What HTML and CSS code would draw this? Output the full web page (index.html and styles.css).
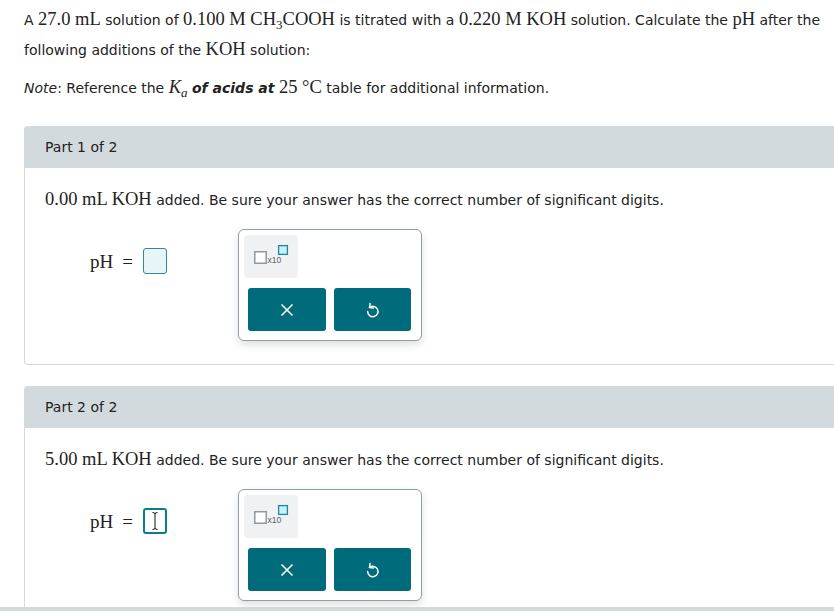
FILE: index.html
```html
<!DOCTYPE html>
<html>
<head>
<meta charset="utf-8">
<link rel="stylesheet" href="styles.css">
</head>
<body>
<div class="page">
  <p class="intro">A <span class="m">27.0 mL</span> solution of <span class="m">0.100 M CH<sub>3</sub>COOH</span> is titrated with a <span class="m">0.220 M KOH</span> solution. Calculate the <span class="m">pH</span> after the following additions of the <span class="m">KOH</span> solution:</p>
  <p class="note"><i>Note</i>: Reference the <span class="m"><i>K</i><sub><i>a</i></sub></span> <b><i>of acids at</i></b> <span class="m">25 °C</span> table for additional information.</p>

  <section class="part">
    <div class="part-head">Part 1 of 2</div>
    <div class="part-body">
      <div class="question"><span class="m">0.00 mL KOH</span> added. Be sure your answer has the correct number of significant digits.</div>
      <div class="answer-row">
        <div class="eq"><span class="m lbl">pH</span><span class="m eqs">=</span><span class="box"></span></div>
        <div class="popup">
          <div class="tool">
            <svg width="54" height="43" viewBox="0 0 54 43">
              <rect x="10.75" y="16.75" width="11.5" height="11.5" fill="#fff" stroke="#8d9aa1" stroke-width="1.5"/>
              <text x="23.5" y="28" font-family="Liberation Sans, sans-serif" font-size="8.5" fill="#5a6268">x10</text>
              <rect x="34.6" y="10.6" width="8.8" height="8.8" fill="#c9eef4" stroke="#1a8ba0" stroke-width="1.3"/>
            </svg>
          </div>
          <div class="btns">
            <button class="btn"><svg width="14" height="14" viewBox="0 0 14 14"><path d="M1.5 1.5 L12.5 12.5 M12.5 1.5 L1.5 12.5" stroke="#fff" stroke-width="1.6" fill="none"/></svg></button>
            <button class="btn"><svg width="15" height="16" viewBox="0 0 15 16"><path d="M4.6 5.4 A5.2 5.2 0 1 1 2.6 9.6" stroke="#fff" stroke-width="1.5" fill="none" stroke-linecap="round"/><path d="M5 1.6 L4.5 5.6 L8.4 5.9" stroke="#fff" stroke-width="1.5" fill="none" stroke-linecap="round" stroke-linejoin="round"/></svg></button>
          </div>
        </div>
      </div>
    </div>
  </section>

  <section class="part">
    <div class="part-head">Part 2 of 2</div>
    <div class="part-body">
      <div class="question"><span class="m">5.00 mL KOH</span> added. Be sure your answer has the correct number of significant digits.</div>
      <div class="answer-row">
        <div class="eq"><span class="m lbl">pH</span><span class="m eqs">=</span><span class="box focus"><svg width="8" height="20" viewBox="0 0 8 20"><path d="M1.5 1.5 Q4 1.5 4 3 L4 17 Q4 18.5 1.5 18.5 M6.5 1.5 Q4 1.5 4 3 M6.5 18.5 Q4 18.5 4 17" stroke="#fff" stroke-width="2.6" fill="none"/><path d="M1.5 1.5 Q4 1.5 4 3 L4 17 Q4 18.5 1.5 18.5 M6.5 1.5 Q4 1.5 4 3 M6.5 18.5 Q4 18.5 4 17" stroke="#111" stroke-width="1" fill="none"/></svg></span></div>
        <div class="popup">
          <div class="tool">
            <svg width="54" height="43" viewBox="0 0 54 43">
              <rect x="10.75" y="16.75" width="11.5" height="11.5" fill="#fff" stroke="#8d9aa1" stroke-width="1.5"/>
              <text x="23.5" y="28" font-family="Liberation Sans, sans-serif" font-size="8.5" fill="#5a6268">x10</text>
              <rect x="34.6" y="10.6" width="8.8" height="8.8" fill="#c9eef4" stroke="#1a8ba0" stroke-width="1.3"/>
            </svg>
          </div>
          <div class="btns">
            <button class="btn"><svg width="14" height="14" viewBox="0 0 14 14"><path d="M1.5 1.5 L12.5 12.5 M12.5 1.5 L1.5 12.5" stroke="#fff" stroke-width="1.6" fill="none"/></svg></button>
            <button class="btn"><svg width="15" height="16" viewBox="0 0 15 16"><path d="M4.6 5.4 A5.2 5.2 0 1 1 2.6 9.6" stroke="#fff" stroke-width="1.5" fill="none" stroke-linecap="round"/><path d="M5 1.6 L4.5 5.6 L8.4 5.9" stroke="#fff" stroke-width="1.5" fill="none" stroke-linecap="round" stroke-linejoin="round"/></svg></button>
          </div>
        </div>
      </div>
    </div>
  </section>
</div>
<div class="footer-bar"></div>
</body>
</html>
```

FILE: styles.css
```css
html, body {
  margin: 0;
  padding: 0;
  background: #fff;
}
body {
  font-family: "DejaVu Sans", Verdana, sans-serif;
  font-size: 14px;
  color: #222;
  overflow: hidden;
}
.page {
  padding: 5px 0 0 24px;
}
.intro {
  margin: 0;
  line-height: 30px;
  width: 810px;
}
.note {
  margin: 8px 0 0 0;
  line-height: 30px;
}
.m {
  font-family: "Liberation Serif", "Times New Roman", serif;
  font-size: 18.5px;
  line-height: 1;
}
.m sub {
  font-size: 13px;
  vertical-align: -4px;
  line-height: 0;
}
.part {
  margin-top: 23px;
  margin-right: -40px;
}
.part + .part {
  margin-top: 21px;
}
.part-head {
  background: #d2dadd;
  height: 42px;
  line-height: 43px;
  padding-left: 21px;
  border-radius: 4px 0 0 0;
}
.part-body {
  border-left: 1px solid #d2dadd;
  border-bottom: 1px solid #d2dadd;
  border-radius: 0 0 0 4px;
  padding: 22px 20px 23px 20px;
}
.question {
  line-height: 20px;
}
.answer-row {
  display: flex;
  align-items: flex-start;
  margin-top: 19px;
}
.eq {
  display: flex;
  align-items: center;
  margin-left: 45px;
  margin-top: 19px;
  height: 26px;
}
.lbl {
  font-size: 19px;
}
.eqs {
  font-size: 19px;
  margin-left: 9px;
  margin-right: 10px;
}
.box {
  box-sizing: border-box;
  width: 24px;
  height: 26px;
  border: 1px solid #2c8a9b;
  border-radius: 3px;
  background: #e7f5f9;
  display: flex;
  align-items: center;
  justify-content: center;
}
.box.focus {
  border: 2px solid #0a7c8e;
  background: #fff;
}
.popup {
  margin-left: 71px;
  width: 184px;
  flex: none;
  box-sizing: border-box;
  border: 1px solid #8e9ea6;
  border-radius: 6px;
  padding: 5px 9px 9px 5px;
  background: #fff;
  box-shadow: 0 4px 8px rgba(0, 0, 0, 0.12);
}
.tool {
  width: 54px;
  height: 43px;
  background: #eff1f2;
  border-radius: 4px;
}
.tool svg {
  display: block;
}
.btns {
  display: flex;
  gap: 8px;
  margin-top: 10px;
  padding-left: 4px;
}
.btn {
  width: 78px;
  height: 43px;
  border: none;
  border-radius: 3px;
  background: #006b7a;
  display: flex;
  align-items: center;
  justify-content: center;
  padding: 0;
}
.btn + .btn {
  width: 77px;
}
.btn svg {
  display: block;
}
.footer-bar {
  position: fixed;
  left: 0;
  right: 0;
  bottom: 0;
  height: 4px;
  background: #d2dadd;
}
```
